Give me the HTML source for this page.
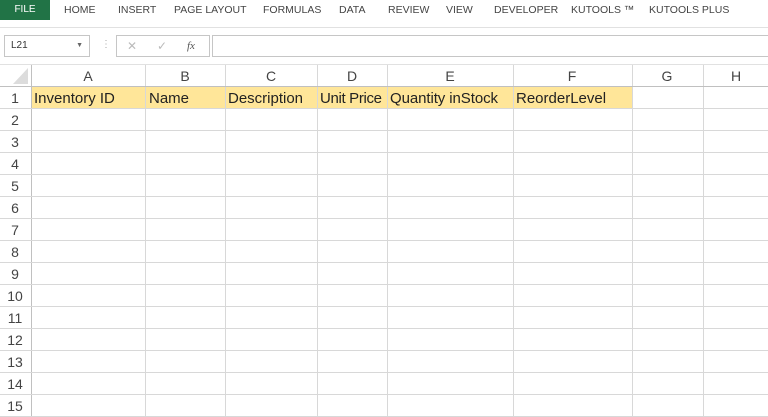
<!DOCTYPE html>
<html><head><style>
*{margin:0;padding:0;box-sizing:border-box}
body{width:768px;height:417px;overflow:hidden;background:#fff;font-family:"Liberation Sans",sans-serif;position:relative}
.tab{position:absolute;top:4px;font-size:10.5px;color:#444}
.abs{position:absolute}
</style></head><body>
<div class="abs" style="left:0;top:0;width:50px;height:20px;background:#217346;color:#fff;font-size:10px;text-align:center;line-height:20px">FILE</div>
<div class="tab" style="left:64px">HOME</div>
<div class="tab" style="left:118px">INSERT</div>
<div class="tab" style="left:174px">PAGE LAYOUT</div>
<div class="tab" style="left:263px">FORMULAS</div>
<div class="tab" style="left:339px">DATA</div>
<div class="tab" style="left:388px">REVIEW</div>
<div class="tab" style="left:446px">VIEW</div>
<div class="tab" style="left:494px">DEVELOPER</div>
<div class="tab" style="left:571px">KUTOOLS ™</div>
<div class="tab" style="left:649px">KUTOOLS PLUS</div>
<div class="abs" style="left:0;top:27px;width:768px;height:1px;background:#e1e1e1"></div>
<div class="abs" style="left:4px;top:35px;width:86px;height:22px;border:1px solid #c6c6c6;font-size:10px;line-height:20px;padding-left:6px;color:#333">L21<span style="position:absolute;right:6px;top:0;font-size:7px;color:#666">▼</span></div>
<div class="abs" style="left:101px;top:39px;font-size:10px;color:#aaa">⋮</div>
<div class="abs" style="left:116px;top:35px;width:94px;height:22px;border:1px solid #c6c6c6;font-size:12px;color:#bbb;line-height:20px"><span style="position:absolute;left:10px">✕</span><span style="position:absolute;left:40px">✓</span><span style="position:absolute;left:70px;font-family:'Liberation Serif',serif;font-style:italic;color:#555;font-size:11px">fx</span></div>
<div class="abs" style="left:212px;top:35px;width:560px;height:22px;border:1px solid #c6c6c6"></div>
<div class="abs" style="left:0;top:64px;width:768px;height:1px;background:#e1e1e1"></div>
<svg class="abs" style="left:0;top:0" width="768" height="417">
<polygon points="28,68 28,84 13,84" fill="#dcdcdc"/>
<rect x="31" y="86" width="601" height="22" fill="#ffe699"/>
<g stroke="#d8d8d8" stroke-width="1">
<line x1="31.5" y1="65" x2="31.5" y2="417" stroke="#c0c0c0"/>
<line x1="145.5" y1="65" x2="145.5" y2="417"/><line x1="225.5" y1="65" x2="225.5" y2="417"/>
<line x1="317.5" y1="65" x2="317.5" y2="417"/><line x1="387.5" y1="65" x2="387.5" y2="417"/>
<line x1="513.5" y1="65" x2="513.5" y2="417"/><line x1="632.5" y1="65" x2="632.5" y2="417"/>
<line x1="703.5" y1="65" x2="703.5" y2="417"/>
<line x1="0" y1="86.5" x2="768" y2="86.5" stroke="#c0c0c0"/>
<line x1="0" y1="108.5" x2="768" y2="108.5"/><line x1="0" y1="130.5" x2="768" y2="130.5"/>
<line x1="0" y1="152.5" x2="768" y2="152.5"/><line x1="0" y1="174.5" x2="768" y2="174.5"/>
<line x1="0" y1="196.5" x2="768" y2="196.5"/><line x1="0" y1="218.5" x2="768" y2="218.5"/>
<line x1="0" y1="240.5" x2="768" y2="240.5"/><line x1="0" y1="262.5" x2="768" y2="262.5"/>
<line x1="0" y1="284.5" x2="768" y2="284.5"/><line x1="0" y1="306.5" x2="768" y2="306.5"/>
<line x1="0" y1="328.5" x2="768" y2="328.5"/><line x1="0" y1="350.5" x2="768" y2="350.5"/>
<line x1="0" y1="372.5" x2="768" y2="372.5"/><line x1="0" y1="394.5" x2="768" y2="394.5"/>
<line x1="0" y1="416.5" x2="768" y2="416.5"/>
</g>
<g font-family="Liberation Sans, sans-serif" font-size="14" fill="#444" text-anchor="middle">
<text x="88" y="81">A</text><text x="185" y="81">B</text><text x="271" y="81">C</text><text x="352" y="81">D</text>
<text x="450" y="81">E</text><text x="572" y="81">F</text><text x="667" y="81">G</text><text x="736" y="81">H</text>
<text x="15" y="103">1</text><text x="15" y="125">2</text><text x="15" y="147">3</text><text x="15" y="169">4</text>
<text x="15" y="191">5</text><text x="15" y="213">6</text><text x="15" y="235">7</text><text x="15" y="257">8</text>
<text x="15" y="279">9</text><text x="15" y="301">10</text><text x="15" y="323">11</text><text x="15" y="345">12</text>
<text x="15" y="367">13</text><text x="15" y="389">14</text><text x="15" y="411">15</text>
</g>
<g font-family="Liberation Sans, sans-serif" font-size="15" fill="#222">
<text x="34" y="103">Inventory ID</text><text x="149" y="103">Name</text><text x="228" y="103">Description</text>
<text x="320" y="103" textLength="62">Unit Price</text><text x="390" y="103" textLength="108">Quantity inStock</text><text x="516" y="103">ReorderLevel</text>
</g>
</svg>
</body></html>
